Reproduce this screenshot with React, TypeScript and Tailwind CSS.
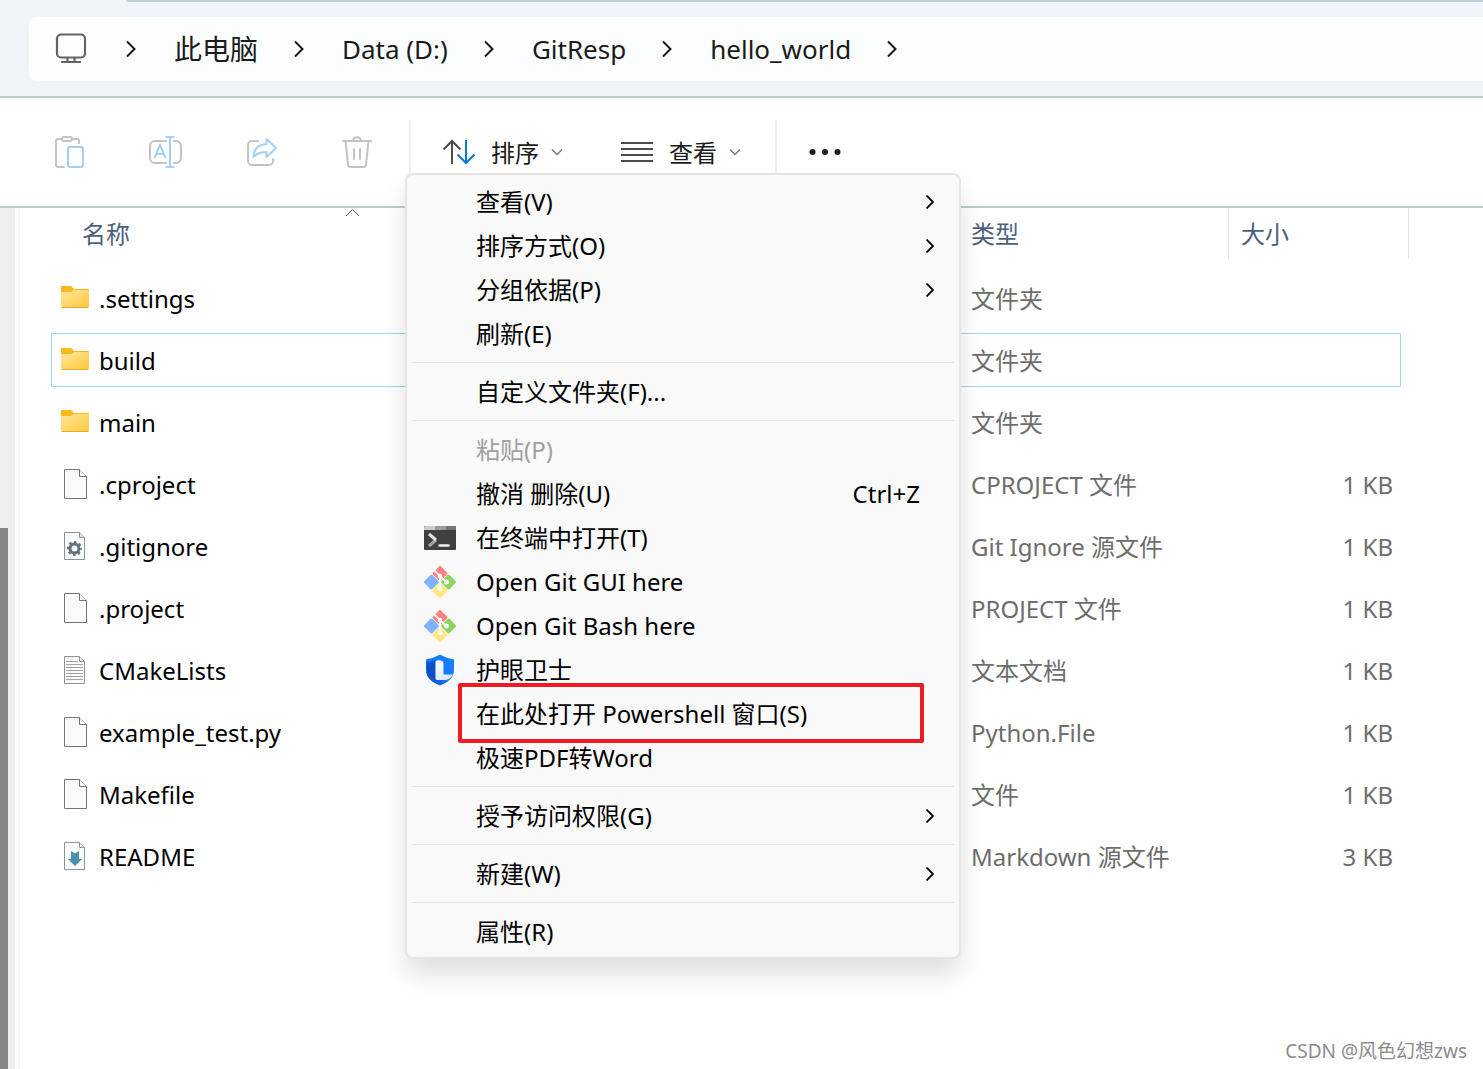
import React from "react";

type Svg = { className?: string };

const ChevronRight = ({ className = "" }: Svg) => (
  <svg className={className} width="10" height="18" viewBox="0 0 10 18" fill="none" stroke="currentColor" strokeWidth="2" aria-hidden="true">
    <path d="M1 1.5 8.5 9 1 16.5" />
  </svg>
);

const MenuChevron = () => (
  <svg width="8" height="14" viewBox="0 0 8 14" fill="none" stroke="#000" strokeWidth="1.800" aria-hidden="true">
    <path d="M0.5 0.5 7 7 0.5 13.5" />
  </svg>
);

const ChevronDown = () => (
  <svg width="12" height="8" viewBox="0 0 12 8" fill="none" stroke="#7a7a7a" strokeWidth="1.5" aria-hidden="true">
    <path d="M1 1.5 6 6.5 11 1.5" />
  </svg>
);

const MonitorIcon = () => (
  <svg width="32" height="32" viewBox="0 0 32 32" fill="none" stroke="#646464" strokeWidth="2.200" strokeLinecap="round" aria-hidden="true">
    <rect x="2" y="1.500" width="28" height="23" rx="4" />
    <path d="M12.500 25v4M19.500 25v4M7 29h18" />
  </svg>
);

const PasteIcon = () => (
  <svg width="32" height="32" viewBox="0 0 32 32" fill="none" strokeWidth="2" strokeLinecap="round" strokeLinejoin="round" aria-hidden="true">
    <g stroke="#c3c3c3">
      <path d="M8 3H5a2 2 0 0 0-2 2v24a2 2 0 0 0 2 2h6" />
      <path d="M19 3h5a2 2 0 0 1 2 2v2" />
      <rect x="9" y="1" width="10" height="4" rx="2" />
    </g>
    <rect x="15" y="11" width="15" height="20" rx="2" stroke="#a5cff0" />
  </svg>
);

const RenameIcon = () => (
  <svg width="34" height="32" viewBox="0 0 34 32" fill="none" strokeWidth="2" aria-hidden="true">
    <g stroke="#c3c3c3" strokeLinecap="round">
      <path d="M18 5H7a5 5 0 0 0-5 5v12a5 5 0 0 0 5 5h11" />
      <path d="M26 5h2a5 5 0 0 1 5 5v12a5 5 0 0 1-5 5h-2" />
    </g>
    <g stroke="#a5cff0">
      <path d="M22 1v30M17.500 1h9M17.500 31h9" />
      <path d="M6.500 22 12 9l5.500 13M8.500 18h7" />
    </g>
  </svg>
);

const ShareIcon = () => (
  <svg width="32" height="32" viewBox="-1 0 32 32" fill="none" strokeWidth="2" strokeLinecap="round" strokeLinejoin="round" aria-hidden="true">
    <path d="M12 5H6a4 4 0 0 0-4 4v16a4 4 0 0 0 4 4h17a4 4 0 0 0 4-4v-2" stroke="#c3c3c3" />
    <path d="M20.500 3 30 12l-9.500 9v-5c-6-.2-9.500 1.200-13 5 .5-8 4.500-12.500 13-13z" stroke="#a5cff0" />
  </svg>
);

const TrashIcon = () => (
  <svg width="32" height="32" viewBox="0 0 32 32" fill="none" stroke="#c3c3c3" strokeWidth="2" strokeLinecap="round" aria-hidden="true">
    <path d="M2 5h28M12 5c0-5 8-5 8 0M4.500 5 7 28.500a2.500 2.500 0 0 0 2.500 2.500h13a2.500 2.500 0 0 0 2.500-2.500L27.500 5M13 13v10M19 13v10" />
  </svg>
);

const SortIcon = () => (
  <svg width="32" height="26" viewBox="0 0 32 26" fill="none" strokeWidth="2" aria-hidden="true">
    <path d="M9 25V2M0.500 10.500 9 2l8.500 8.500" stroke="#4d4d4d" />
    <path d="M23 1v23M14.500 15.500 23 24l8.500-8.500" stroke="#0078d4" />
  </svg>
);

const LinesIcon = () => (
  <svg width="32" height="22" viewBox="0 0 32 22" stroke="#4d4d4d" strokeWidth="2" aria-hidden="true">
    <path d="M0 2h32M0 8h32M0 14h32M0 20h32" />
  </svg>
);

const DotsIcon = () => (
  <svg width="32" height="8" viewBox="0 0 32 8" fill="#1b1b1b" aria-hidden="true">
    <circle cx="3.500" cy="4" r="3" />
    <circle cx="16" cy="4" r="3" />
    <circle cx="28.500" cy="4" r="3" />
  </svg>
);

const FolderIcon = () => (
  <svg width="28" height="24" viewBox="0 1 28 24" aria-hidden="true">
    <defs>
      <linearGradient id="folder" x1="0" y1="0" x2="1" y2="1">
        <stop offset="0" stopColor="#ffe7a0" />
        <stop offset="1" stopColor="#ffc83a" />
      </linearGradient>
    </defs>
    <path d="M0 2a1 1 0 0 1 1-1h9l3 3h14a1 1 0 0 1 1 1v5H0z" fill="#f9b91c" />
    <path d="M0 8a1 1 0 0 1 1-1h9l3-2h14a1 1 0 0 1 1 1v15a1 1 0 0 1-1 1H1a1 1 0 0 1-1-1z" fill="url(#folder)" />
    <path d="M0.500 22.500h27" stroke="#e9ab25" />
  </svg>
);

const BlankIcon = () => (
  <svg width="24" height="30" viewBox="0 0 24 30" fill="#fafafa" stroke="#737373" aria-hidden="true">
    <path d="M1.500.5h15l7 7v22h-22z" />
    <path d="M16.500.5v7h7" fill="#fff" />
  </svg>
);

const SmallPage = ({ children }: { children: React.ReactNode }) => (
  <svg width="22" height="28" viewBox="0 0 22 28" fill="#fafbfc" stroke="#8f9294" aria-hidden="true">
    <path d="M.5.5h15l5 5v22H.5z" />
    <path d="M15.500.5v5h5" fill="#e4e6e7" />
    {children}
  </svg>
);

const GearIcon = () => (
  <SmallPage>
    <g transform="translate(10.500 16.500)" stroke="#5f737d" fill="none">
      <circle r="4.500" strokeWidth="3" />
      <circle r="6.500" strokeWidth="2" strokeDasharray="2.600 2.500" strokeDashoffset="1.300" />
    </g>
  </SmallPage>
);

const TextIcon = () => (
  <SmallPage>
    <path d="M2 5.500h12M2 8.500h17M2 11.500h17M2 14.500h17M2 17.500h17M2 20.500h17M2 23.500h17" stroke="#a3a3a3" />
  </SmallPage>
);

const MarkdownIcon = () => (
  <SmallPage>
    <path d="M7 9l4 2.500L15 9v8h3l-7 7-7-7h3z" fill="#4a8fac" stroke="none" />
  </SmallPage>
);

const TerminalIcon = () => (
  <svg width="32" height="24" viewBox="0 0 32 24" fill="none" aria-hidden="true">
    <rect width="32" height="24" rx="1" fill="#404040" />
    <path d="M1 0h10v4H0V1z" fill="#cbcbcb" />
    <path d="M11 0h11v4H11z" fill="#9b9b9b" />
    <path d="M22 0h9l1 1v3H22z" fill="#767676" />
    <path d="M5 20l7-6" stroke="#a3a3a3" strokeWidth="3" />
    <path d="M5 8l7 6" stroke="#e2e2e2" strokeWidth="3" />
    <path d="M15.500 19.500h9" stroke="#f0f0f0" strokeWidth="2.500" strokeLinecap="round" />
  </svg>
);

const GitIcon = () => (
  <svg width="32" height="32" viewBox="0 0 32 32" aria-hidden="true">
    <g transform="rotate(45 16 16)">
      <rect x="4.300" y="4.300" width="11.300" height="11.300" rx="1.500" fill="#ff8080" />
      <rect x="16.400" y="4.300" width="11.300" height="11.300" rx="1.500" fill="#8bd45c" />
      <rect x="16.400" y="16.400" width="11.300" height="11.300" rx="1.500" fill="#ffe680" />
      <rect x="4.300" y="16.400" width="11.300" height="11.300" rx="1.500" fill="#80b3ff" />
    </g>
    <g stroke="#f9f9f9" strokeWidth="1.800" fill="none">
      <path d="M10 4l6 6v13M16 10l6 6" />
    </g>
    <g fill="#f9f9f9">
      <circle cx="16" cy="10" r="2.300" />
      <circle cx="22.500" cy="16" r="2.500" />
      <circle cx="16" cy="22.500" r="2.500" />
    </g>
  </svg>
);

const ShieldIcon = () => (
  <svg width="32" height="32" viewBox="0 0 32 32" aria-hidden="true">
    <defs>
      <linearGradient id="shield" x1="1" y1="0" x2="0" y2="1">
        <stop offset="0" stopColor="#1583ff" />
        <stop offset="0.500" stopColor="#1877f8" />
        <stop offset="1" stopColor="#0a45b5" />
      </linearGradient>
      <linearGradient id="hand" x1="0" y1="0" x2="1" y2="1">
        <stop offset="0" stopColor="#fff" />
        <stop offset="1" stopColor="#cfe3ff" />
      </linearGradient>
    </defs>
    <path d="M16 .5c4 2.300 8.500 4 13 4.500 1 0 1 .8 1 2v9c0 8-6.500 12.500-14 15.500C8.500 28.500 2 24 2 16V7c0-1.200 0-2 1-2 4.500-.5 9-2.200 13-4.500z" fill="url(#shield)" />
    <path d="M3 9c3-1.500 6-2 9.500-2v20C6 24 3 19 3 14z" fill="#0b48b8" opacity=".75" />
    <path d="M13 6.500c3-1 6.500 0 6.500 3v11h9.500c-2 4-5 5.500-9 5.500h-7c-1 0-1.500-1-1.500-2V8c0-1 .5-1.200 1.500-1.500z" fill="url(#hand)" />
  </svg>
);

type IconKind = "folder" | "blank" | "gear" | "text" | "markdown";
const fileIcons: Record<IconKind, React.ReactNode> = {
  folder: <FolderIcon />,
  blank: <BlankIcon />,
  gear: <GearIcon />,
  text: <TextIcon />,
  markdown: <MarkdownIcon />,
};

const files: { name: string; type: string; size: string; icon: IconKind; focused?: boolean }[] = [
  { name: ".settings", type: "文件夹", size: "", icon: "folder" },
  { name: "build", type: "文件夹", size: "", icon: "folder", focused: true },
  { name: "main", type: "文件夹", size: "", icon: "folder" },
  { name: ".cproject", type: "CPROJECT 文件", size: "1 KB", icon: "blank" },
  { name: ".gitignore", type: "Git Ignore 源文件", size: "1 KB", icon: "gear" },
  { name: ".project", type: "PROJECT 文件", size: "1 KB", icon: "blank" },
  { name: "CMakeLists", type: "文本文档", size: "1 KB", icon: "text" },
  { name: "example_test.py", type: "Python.File", size: "1 KB", icon: "blank" },
  { name: "Makefile", type: "文件", size: "1 KB", icon: "blank" },
  { name: "README", type: "Markdown 源文件", size: "3 KB", icon: "markdown" },
];

type Item = {
  label: string;
  icon?: React.ReactNode;
  submenu?: boolean;
  shortcut?: string;
  disabled?: boolean;
  marked?: boolean;
};

const menuGroups: Item[][] = [
  [
    { label: "查看(V)", submenu: true },
    { label: "排序方式(O)", submenu: true },
    { label: "分组依据(P)", submenu: true },
    { label: "刷新(E)" },
  ],
  [{ label: "自定义文件夹(F)..." }],
  [
    { label: "粘贴(P)", disabled: true },
    { label: "撤消 删除(U)", shortcut: "Ctrl+Z" },
    { label: "在终端中打开(T)", icon: <TerminalIcon /> },
    { label: "Open Git GUI here", icon: <GitIcon /> },
    { label: "Open Git Bash here", icon: <GitIcon /> },
    { label: "护眼卫士", icon: <ShieldIcon /> },
    { label: "在此处打开 Powershell 窗口(S)", marked: true },
    { label: "极速PDF转Word" },
  ],
  [{ label: "授予访问权限(G)", submenu: true }],
  [{ label: "新建(W)", submenu: true }],
  [{ label: "属性(R)" }],
];

const crumbs = [
  { label: "此电脑", size: "text-[28px]" },
  { label: "Data (D:)", size: "text-[26px]" },
  { label: "GitResp", size: "text-[26px]" },
  { label: "hello_world", size: "text-[26px]" },
];

function AddressBar() {
  return (
    <header className="flex h-[98px] flex-col border-b-2 border-[#bccace] bg-[#eff4f8]">
      <div className="ml-[126px] h-[2px] rounded-bl bg-[#bfd0d6]" />
      <nav aria-label="路径" className="mt-[15px] ml-[29px] flex h-16 items-center rounded-l-lg bg-[#fbfdfe] pl-[26px] leading-9 text-[#1b1b1b]">
        <button aria-label="位置" className="mr-[39px]"><MonitorIcon /></button>
        <ChevronRight />
        {crumbs.map((crumb) => (
          <React.Fragment key={crumb.label}>
            <button className={`mr-9 ml-[38px] whitespace-nowrap ${crumb.size}`}>{crumb.label}</button>
            <ChevronRight />
          </React.Fragment>
        ))}
      </nav>
    </header>
  );
}

function Toolbar() {
  return (
    <div role="toolbar" className="flex h-[110px] items-center border-b-2 border-[#bccace] pl-[45px] text-[24px] leading-8 text-[#1b1b1b]">
      <div className="flex gap-12">
        <button aria-label="粘贴" className="flex h-12 w-12 items-center justify-center"><PasteIcon /></button>
        <button aria-label="重命名" className="flex h-12 w-12 items-center justify-center"><RenameIcon /></button>
        <button aria-label="共享" className="flex h-12 w-12 items-center justify-center"><ShareIcon /></button>
        <button aria-label="删除" className="flex h-12 w-12 items-center justify-center"><TrashIcon /></button>
      </div>
      <div className="ml-7 h-16 w-[2px] bg-[#efefef]" />
      <button className="ml-8 flex items-center gap-3 whitespace-nowrap">
        <SortIcon /><span className="pt-[2px] pl-1">排序</span><ChevronDown />
      </button>
      <button className="ml-[58px] flex items-center gap-3 whitespace-nowrap">
        <LinesIcon /><span className="pt-[2px] pl-1">查看</span><ChevronDown />
      </button>
      <div className="ml-[34px] h-16 w-[2px] bg-[#efefef]" />
      <button aria-label="更多" className="ml-8"><DotsIcon /></button>
    </div>
  );
}

function FileTable() {
  return (
    <table className="-mt-2 w-full table-fixed border-separate border-spacing-x-0 border-spacing-y-2 text-[24px] leading-8">
      <colgroup>
        <col />
        <col className="w-[269px]" />
        <col className="w-[172px]" />
      </colgroup>
      <thead className="text-left text-[#4c607a]">
        <tr className="h-[55px] align-top">
          <th className="p-0 font-normal">
            <div className="relative flex h-[51px] items-center pl-[31px]">
              名称
              <svg className="absolute top-0 left-[294px]" width="15" height="9" viewBox="0 0 15 9" fill="none" stroke="#5c5c5c" aria-hidden="true">
                <path d="M1 8l6.500-6.500L14 8" />
              </svg>
            </div>
          </th>
          <th className="p-0 font-normal">
            <div className="flex h-[51px] items-center border-r border-[#e3e3e3] pl-[11px]">类型</div>
          </th>
          <th className="p-0 font-normal">
            <div className="-mr-2 flex h-[51px] items-center border-r border-[#e3e3e3] pl-3">大小</div>
          </th>
        </tr>
      </thead>
      <tbody>
        {files.map((f) => {
          const edge = f.focused ? "border-[#99d1ff]" : "border-transparent";
          return (
            <tr key={f.name} className="h-[54px]">
              <td className={`rounded-l-xs border-y border-l p-0 text-black ${edge}`}>
                <div className="flex items-center pl-2">
                  <span className="flex w-[30px] items-center justify-center">{fileIcons[f.icon]}</span>
                  <span className="pt-[2px] pl-[9px]">{f.name}</span>
                </div>
              </td>
              <td className={`border-y px-0 pt-[2px] pb-0 pl-[11px] whitespace-nowrap text-[#6d6d6d] ${edge}`}>{f.type}</td>
              <td className={`rounded-r-xs border-y border-r pt-[2px] pr-[7px] pb-0 pl-0 text-right text-[#6d6d6d] ${edge}`}>{f.size}</td>
            </tr>
          );
        })}
      </tbody>
    </table>
  );
}

function ContextMenu() {
  return (
    <div role="menu" className="absolute top-[173px] left-[405px] w-[556px] rounded-lg border-2 border-[#e5e5e5] bg-[#f9f9f9] px-[5px] pt-[5px] pb-[3px] text-[24px] leading-8 text-black shadow-[0_16px_24px_rgba(0,0,0,0.12)]">
      {menuGroups.map((group, i) => (
        <React.Fragment key={i}>
          {i > 0 && <div role="separator" className="mt-[6px] mb-[7px] h-px bg-[#e3e3e3]" />}
          {group.map((item) => (
            <button
              key={item.label}
              role="menuitem"
              disabled={item.disabled}
              className="relative flex h-11 w-full items-center pr-5 pl-3 text-left disabled:text-[#a0a0a0]"
            >
              <span className="flex w-8 shrink-0 justify-center">{item.icon}</span>
              <span className="flex-1 pl-5 whitespace-nowrap">{item.label}</span>
              <span>{item.shortcut}</span>
              <span className="ml-[6px] w-2">{item.submenu && <MenuChevron />}</span>
              {item.marked && (
                <span className="pointer-events-none absolute -top-[9px] right-[30px] -bottom-[7px] left-[46px] z-10 rounded-xs border-4 border-[#ed1c24]" />
              )}
            </button>
          ))}
        </React.Fragment>
      ))}
    </div>
  );
}

export default function App() {
  return (
    <div className="relative flex min-h-screen flex-col overflow-hidden bg-white font-['Noto_Sans','Noto_Sans_CJK_SC',sans-serif]">
      <AddressBar />
      <Toolbar />
      <main className="flex flex-1">
        <div className="flex w-[15px] flex-col bg-[#efefef] pt-[320px]">
          <div className="w-2 flex-1 bg-[#858585]" />
        </div>
        <div className="ml-[3px] w-[2px] bg-[#f7f7f7]" />
        <div className="flex-1 pr-[82px] pl-[31px]">
          <FileTable />
        </div>
      </main>
      <ContextMenu />
      <footer className="absolute right-4 bottom-1 text-[19px] leading-7 text-[#8c8c8c]">CSDN @风色幻想zws</footer>
    </div>
  );
}
